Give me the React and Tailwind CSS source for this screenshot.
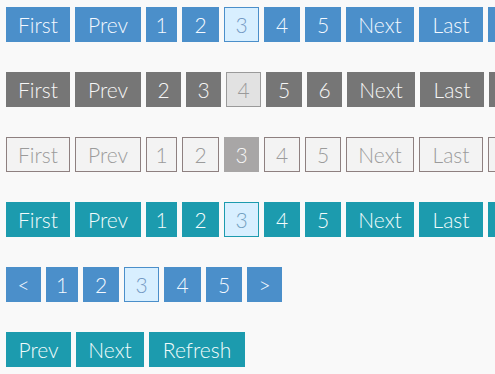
import React from "react";

function Btn({ w, label, variant }) {
  const base =
    "shrink-0 h-[35px] flex items-center justify-center pb-[1px] text-[21px] font-light leading-none box-border";
  const styles = {
    blue: "bg-[#4b8fca] text-[#f4f9ff]",
    blueActive: "bg-[#d8efff] text-[#7499c4] border border-[#4b8fca]",
    gray: "bg-[#767676] text-[#f7f7f7]",
    grayActive: "bg-[#e2e2e2] text-[#9a9a9a] border border-[#9a9a9a]",
    outline: "bg-[#f3f3f3] text-[#9b9b9b] border border-[#8e8080]",
    outlineActive: "bg-[#a8a6a6] text-[#f7f7f7]",
    teal: "bg-[#1c9bae] text-[#f2fbfc]",
    tealActive: "bg-[#d8efff] text-[#73a0bf] border border-[#1c9bae]",
  };
  return <div className={`${base} ${w} ${styles[variant]}`}>{label}</div>;
}

function Row({ items }) {
  return (
    <div className="flex flex-nowrap gap-[5px]">
      {items.map((it, i) => (
        <Btn key={i} {...it} />
      ))}
    </div>
  );
}

const pageRow = (v, a) => [
  { w: "w-[64px]", label: "First", variant: v },
  { w: "w-[66px]", label: "Prev", variant: v },
  { w: "w-[31px]", label: "1", variant: v },
  { w: "w-[37px]", label: "2", variant: v },
  { w: "w-[35px]", label: "3", variant: a },
  { w: "w-[36px]", label: "4", variant: v },
  { w: "w-[36px]", label: "5", variant: v },
  { w: "w-[68px]", label: "Next", variant: v },
  { w: "w-[64px]", label: "Last", variant: v },
  { w: "w-[40px]", label: "", variant: v },
];

export default function App() {
  const r2 = [
    { w: "w-[64px]", label: "First", variant: "gray" },
    { w: "w-[66px]", label: "Prev", variant: "gray" },
    { w: "w-[35px]", label: "2", variant: "gray" },
    { w: "w-[35px]", label: "3", variant: "gray" },
    { w: "w-[35px]", label: "4", variant: "grayActive" },
    { w: "w-[36px]", label: "5", variant: "gray" },
    { w: "w-[35px]", label: "6", variant: "gray" },
    { w: "w-[68px]", label: "Next", variant: "gray" },
    { w: "w-[64px]", label: "Last", variant: "gray" },
    { w: "w-[40px]", label: "", variant: "gray" },
  ];
  const r5 = [
    { w: "w-[35px]", label: "<", variant: "blue" },
    { w: "w-[32px]", label: "1", variant: "blue" },
    { w: "w-[36px]", label: "2", variant: "blue" },
    { w: "w-[35px]", label: "3", variant: "blueActive" },
    { w: "w-[37px]", label: "4", variant: "blue" },
    { w: "w-[36px]", label: "5", variant: "blue" },
    { w: "w-[35px]", label: ">", variant: "blue" },
  ];
  const r6 = [
    { w: "w-[65px]", label: "Prev", variant: "teal" },
    { w: "w-[68px]", label: "Next", variant: "teal" },
    { w: "w-[96px]", label: "Refresh", variant: "teal" },
  ];
  return (
    <div className="w-screen h-screen overflow-hidden bg-[#f9f9f9] pl-[6px] pt-[7px] flex flex-col gap-[30px] font-['Lato',sans-serif]">
      <Row items={pageRow("blue", "blueActive")} />
      <Row items={r2} />
      <Row items={pageRow("outline", "outlineActive")} />
      <Row items={pageRow("teal", "tealActive")} />
      <Row items={r5} />
      <Row items={r6} />
    </div>
  );
}
